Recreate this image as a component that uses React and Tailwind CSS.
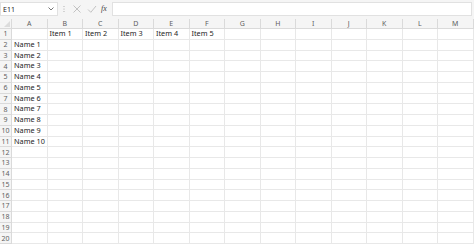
import React from "react";

const cols = ["A","B","C","D","E","F","G","H","I","J","K","L","M"];
const rows = Array.from({ length: 20 }, (_, i) => i + 1);

function cellText(r, c) {
  if (r === 1 && c >= 1 && c <= 5) return `Item ${c}`;
  if (c === 0 && r >= 2 && r <= 11) return `Name ${r - 1}`;
  return "";
}

export default function App() {
  return (
    <div className="w-[474px] h-[244px] overflow-hidden bg-white text-[#1e1e1e]" style={{ fontFamily: '"Noto Sans", "Open Sans", sans-serif' }}>
      {/* formula bar */}
      <div className="h-[19px] bg-[#f5f5f5] flex items-start pt-[2px]">
        <div className="w-[58px] h-[14px] bg-white border border-[#e1e1e1] flex items-center justify-between pl-[2px] pr-[3px]">
          <span className="text-[7px] leading-none">E11</span>
          <svg width="6" height="4" viewBox="0 0 6 4"><path d="M0.5 0.5 L3 3 L5.5 0.5" fill="none" stroke="#666" strokeWidth="0.9" /></svg>
        </div>
        <div className="w-[54px] h-[14px] flex items-center">
          <svg width="10" height="10" viewBox="0 0 10 10" className="ml-[1px]"><circle cx="5" cy="2.5" r="0.6" fill="#aaa"/><circle cx="5" cy="5" r="0.6" fill="#aaa"/><circle cx="5" cy="7.5" r="0.6" fill="#aaa"/></svg>
          <svg width="10" height="10" viewBox="0 0 10 10" className="ml-[3px]"><path d="M1.5 1.5 L8.5 8.5 M8.5 1.5 L1.5 8.5" stroke="#b5b5b5" strokeWidth="0.8"/></svg>
          <svg width="10" height="10" viewBox="0 0 10 10" className="ml-[5px]"><path d="M1 5.5 L3.8 8.3 L9 2" fill="none" stroke="#b5b5b5" strokeWidth="0.8"/></svg>
          <span className="ml-[4px] text-[8px] italic leading-none text-[#444]" style={{ fontFamily: '"Liberation Serif", serif' }}>fx</span>
        </div>
        <div className="flex-1 h-[14px] bg-white border border-[#e1e1e1] mr-[2px]"></div>
      </div>
      {/* grid */}
      <div className="grid grid-cols-[12px_repeat(13,35.5px)]">
        <div className="h-[10px] bg-[#f5f5f5] border-r border-b border-[#dadada] relative">
          <svg className="absolute right-[1px] bottom-[1px]" width="6" height="6" viewBox="0 0 6 6"><path d="M6 0 L6 6 L0 6 Z" fill="#dcdcdc"/></svg>
        </div>
        {cols.map((c) => (
          <div key={c} className="h-[10px] bg-[#f5f5f5] border-r border-b border-[#dadada] flex items-center justify-center text-[7px] leading-none text-[#5f5f5f]">{c}</div>
        ))}
        {rows.map((r) => (
          <React.Fragment key={r}>
            <div className="h-[10.75px] bg-[#f5f5f5] border-r border-b border-[#dadada] flex items-center justify-center text-[7px] leading-none text-[#5f5f5f]">{r}</div>
            {cols.map((c, ci) => (
              <div key={c} className="h-[10.75px] border-r border-b border-[#e8e8e8] flex items-center pl-[2px] text-[7.3px] leading-none whitespace-nowrap overflow-visible">
                {cellText(r, ci)}
              </div>
            ))}
          </React.Fragment>
        ))}
      </div>
    </div>
  );
}
